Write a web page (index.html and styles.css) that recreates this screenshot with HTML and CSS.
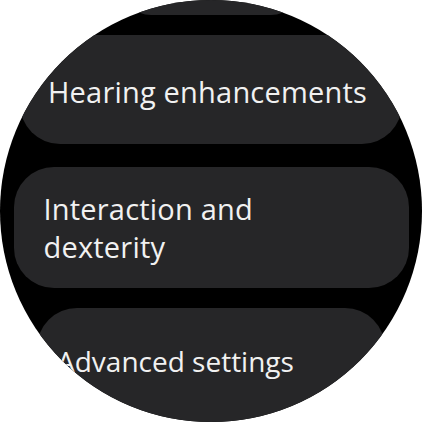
FILE: index.html
```html
<!DOCTYPE html>
<html lang="en">
<head>
  <meta charset="UTF-8">
  <meta name="viewport" content="width=device-width, initial-scale=1.0">
  <title>Accessibility</title>
  <link rel="stylesheet" href="styles.css">
</head>
<body>

  <div class="screen">
    <div class="list">
      <div class="chip chip-far"></div>
      <div class="chip chip-hearing"><span>Hearing enhancements</span></div>
      <div class="chip chip-main"><span>Interaction and<br>dexterity</span></div>
      <div class="chip chip-bottom"><span>Advanced settings</span></div>
    </div>
  </div>

</body>
</html>
```

FILE: styles.css
```css
body {
  margin: 0;
  background-color: #fff;
  font-family: "Open Sans", Roboto, sans-serif;
}

.screen {
  width: 422px;
  height: 422px;
  border-radius: 50%;
  overflow: hidden;
  background-color: #000;
}

.list {
  display: flex;
  flex-direction: column;
  align-items: center;
  margin-top: -45px;
}

.chip {
  box-sizing: border-box;
  display: flex;
  align-items: center;
  background-color: #262628;
  color: #f1f1f1;
  border-radius: 40px;
  font-size: 29px;
  letter-spacing: 0.2px;
  line-height: 38px;
  flex-shrink: 0;
}

.chip-far {
  width: 180px;
  height: 60px;
}

.chip-hearing {
  width: 382px;
  height: 109px;
  margin-top: 20px;
  padding-left: 28px;
  padding-top: 4px;
}

.chip-main {
  width: 395px;
  height: 121px;
  margin-top: 23px;
  padding-left: 30px;
}

.chip-bottom {
  width: 348px;
  height: 124px;
  margin-top: 20px;
  padding-left: 20px;
  padding-bottom: 18px;
  font-size: 28px;
  letter-spacing: 0;
}
```
